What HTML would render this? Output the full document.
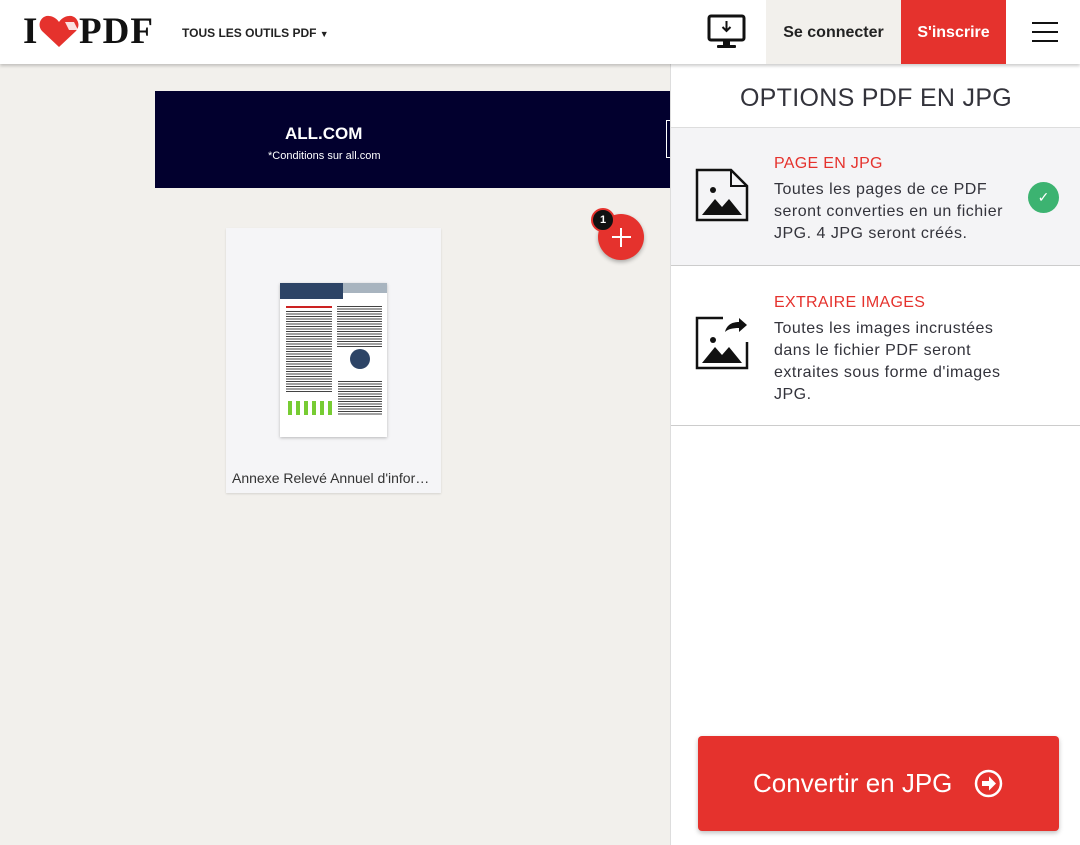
<!DOCTYPE html>
<html><head><meta charset="utf-8"><style>
*{margin:0;padding:0;box-sizing:border-box}
body{width:1080px;height:845px;overflow:hidden;background:#f2f0ec;font-family:"Liberation Sans",sans-serif;position:relative;color:#33333b}
.hdr{position:absolute;left:0;top:0;width:1080px;height:64px;background:#fff;box-shadow:0 2px 3px rgba(0,0,0,.2);z-index:5}
.abs{position:absolute}
.panel{position:absolute;left:670px;top:64px;width:410px;height:781px;background:#fff;border-left:1px solid #ddd}
.opt h4{color:#e5322d;font-weight:normal;font-size:16px;position:absolute;left:103px;letter-spacing:.3px}
.opt p{position:absolute;left:103px;font-size:16px;line-height:22px;color:#33333b;width:250px;letter-spacing:.5px}
</style></head><body>
<div class="hdr">
 <div class="abs" style="left:23px;top:10px;font-family:'Liberation Serif',serif;font-weight:bold;font-size:37px;color:#111;letter-spacing:1px">I</div>
 <svg class="abs" style="left:38px;top:14px" width="42" height="34" viewBox="0 0 42 34"><path d="M21 33 L4 17 C-2 10 4 1 11 2 C15 2 19 5 21 8 C23 5 27 2 31 2 C38 1 44 10 38 17 Z" fill="#e5322d"/><path d="M27 8 L36 8 L40 16 L31 16 Z" fill="#fff" opacity=".85"/></svg>
 <div class="abs" style="left:79px;top:10px;font-family:'Liberation Serif',serif;font-weight:bold;font-size:37px;color:#111;letter-spacing:1px">PDF</div>
 <div class="abs" style="left:182px;top:26px;font-size:12px;font-weight:bold;color:#222">TOUS LES OUTILS PDF <span style="font-size:9px">&#9660;</span></div>
 <svg class="abs" style="left:707px;top:14px" width="40" height="36" viewBox="0 0 40 36"><rect x="2" y="2" width="35" height="24" rx="2" fill="none" stroke="#111" stroke-width="3"/><rect x="16" y="26" width="7" height="5" fill="#111"/><rect x="10" y="31" width="19" height="3" rx="1" fill="#111"/><path d="M19.5 7v10M15.5 13l4 4 4-4" stroke="#111" stroke-width="2" fill="none"/></svg>
 <div class="abs" style="left:766px;top:0;width:135px;height:64px;background:#f2f0ec;font-size:16px;font-weight:bold;line-height:66px;text-align:center;color:#222">Se connecter</div>
 <div class="abs" style="left:901px;top:0;width:105px;height:64px;background:#e5322d;font-size:16px;font-weight:bold;line-height:66px;text-align:center;color:#fff">S'inscrire</div>
 <div class="abs" style="left:1032px;top:22px;width:26px;height:2px;background:#111;box-shadow:0 9px 0 #111,0 18px 0 #111"></div>
</div>
<div class="abs" style="left:155px;top:91px;width:515px;height:97px;background:#02002e;color:#fff">
 <div class="abs" style="left:130px;top:33px;font-weight:bold;font-size:17px">ALL.COM</div>
 <div class="abs" style="left:113px;top:59px;font-size:11px">*Conditions sur all.com</div>
 <div class="abs" style="left:511px;top:29px;width:4px;height:38px;border:1px solid #fff;border-right:none"></div>
</div>
<div class="abs" style="left:226px;top:228px;width:215px;height:265px;background:#f5f5f7;box-shadow:0 1px 2px rgba(0,0,0,.12)">
 <div class="abs" style="left:54px;top:55px;width:107px;height:154px;background:#fff;box-shadow:0 1px 3px rgba(0,0,0,.25);overflow:hidden">
  <div class="abs" style="left:0;top:0;width:63px;height:16px;background:#2d4466"></div>
  <div class="abs" style="left:63px;top:0;width:44px;height:10px;background:#a8b4bf"></div>
  <div class="abs" style="left:6px;top:23px;width:46px;height:2px;background:#c22"></div>
  <div class="abs" style="left:6px;top:28px;width:46px;height:82px;background:repeating-linear-gradient(#222 0 1px,#fff 1px 2.5px);opacity:.85"></div>
  <div class="abs" style="left:57px;top:23px;width:45px;height:42px;background:repeating-linear-gradient(#222 0 1px,#fff 1px 2.5px);opacity:.85"></div>
  <div class="abs" style="left:70px;top:66px;width:20px;height:20px;border-radius:50%;background:#2d4466"></div>
  <div class="abs" style="left:58px;top:98px;width:44px;height:34px;background:repeating-linear-gradient(#222 0 1px,#fff 1px 2.5px);opacity:.85"></div>
  <div class="abs" style="left:8px;top:118px;width:45px;height:14px;background:repeating-linear-gradient(90deg,#7c3 0 4px,#fff 4px 8px)"></div>
 </div>
 <div class="abs" style="left:6px;top:242px;font-size:14px;color:#333">Annexe Relevé Annuel d'infor…</div>
</div>
<div class="abs" style="left:598px;top:214px;width:46px;height:46px;border-radius:50%;background:#e5322d;box-shadow:0 2px 4px rgba(0,0,0,.3)"></div>
<div class="abs" style="left:612px;top:236px;width:19px;height:2px;background:#fff"></div>
<div class="abs" style="left:620px;top:228px;width:2px;height:19px;background:#fff"></div>
<div class="abs" style="left:591px;top:208px;width:24px;height:24px;border-radius:50%;background:#111;border:2px solid #e5322d;color:#fff;font-size:11px;font-weight:bold;text-align:center;line-height:20px">1</div>
<div class="panel">
 <div class="abs" style="left:0;top:20px;width:410px;text-align:center;font-size:25px;color:#33333b;letter-spacing:.3px">OPTIONS PDF EN JPG</div>
 <div class="abs opt" style="left:0;top:63px;width:410px;height:139px;background:#f4f4f6;border-top:1px solid #ddd;border-bottom:1px solid #ccc">
  <svg class="abs" style="left:24px;top:40px" width="54" height="54" viewBox="0 0 54 54"><path d="M2 2h34l16 16v34H2Z" fill="none" stroke="#111" stroke-width="2.5"/><path d="M36 2v16h16" fill="none" stroke="#111" stroke-width="2"/><circle cx="18" cy="22" r="3" fill="#111"/><path d="M7 47l13-16 7 8 7-8 13 16Z" fill="#111"/></svg>
  <h4 style="top:27px">PAGE EN JPG</h4>
  <p style="top:51px">Toutes les pages de ce PDF seront converties en un fichier JPG. 4 JPG seront créés.</p>
  <div class="abs" style="left:357px;top:54px;width:31px;height:31px;border-radius:50%;background:#3cb371;color:#fff;text-align:center;line-height:31px;font-size:14px">&#10003;</div>
 </div>
 <div class="abs opt" style="left:0;top:202px;width:410px;height:160px;border-bottom:1px solid #ccc">
  <svg class="abs" style="left:24px;top:50px" width="54" height="54" viewBox="0 0 54 54"><path d="M28 2H2v50h50V26" fill="none" stroke="#111" stroke-width="2.5"/><path d="M30 16c2-8 8-10 14-10V2l8 7-8 7v-4c-6 0-11 1-14 4Z" fill="#111"/><circle cx="18" cy="24" r="3" fill="#111"/><path d="M7 47l13-16 7 8 7-8 13 16Z" fill="#111"/></svg>
  <h4 style="top:28px">EXTRAIRE IMAGES</h4>
  <p style="top:52px">Toutes les images incrustées dans le fichier PDF seront extraites sous forme d'images JPG.</p>
 </div>
 <div class="abs" style="left:27px;top:672px;width:361px;height:95px;background:#e5322d;border-radius:4px;box-shadow:0 2px 5px rgba(0,0,0,.25);color:#fff;font-size:26px;line-height:95px;padding-left:55px">Convertir en JPG
  <svg class="abs" style="left:276px;top:33px" width="29" height="29" viewBox="0 0 29 29"><circle cx="14.5" cy="14.5" r="12.5" fill="none" stroke="#fff" stroke-width="2.5"/><path d="M8 12h7V7.5l7 7-7 7V17H8Z" fill="#fff"/></svg>
 </div>
</div>
</body></html>
